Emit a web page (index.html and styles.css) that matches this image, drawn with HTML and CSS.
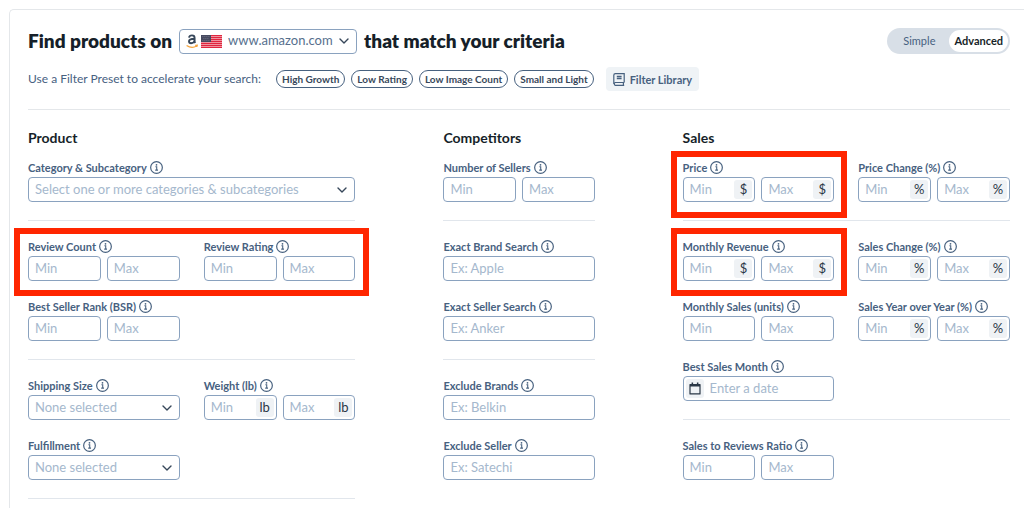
FILE: index.html
```html
<!DOCTYPE html>
<html lang="en">
<head>
    <meta charset="UTF-8">
    <meta name="viewport" content="width=device-width, initial-scale=1.0">
    <title>Product Database</title>
    <link rel="stylesheet" href="styles.css">
</head>
<body>
    <!-- Shared icons -->
    <svg class="sprite" aria-hidden="true">
        <symbol id="info" viewBox="0 0 12 12">
            <circle cx="6" cy="6" r="5.4" fill="none" stroke="currentColor" stroke-width="1.1"/>
            <path d="M5 5.3h1.2v3M4.8 8.4h2.6" fill="none" stroke="currentColor" stroke-width="1"/>
            <circle cx="6" cy="3.5" r="0.8" fill="currentColor"/>
        </symbol>
        <symbol id="chevron" viewBox="0 0 10 6">
            <path d="M1 1l4 4 4-4" fill="none" stroke="currentColor" stroke-width="1.4" stroke-linecap="round" stroke-linejoin="round"/>
        </symbol>
    </svg>

    <main class="card">
        <header class="header">
            <h1 class="title">
                <span class="title-text">Find products on</span>
                <span class="control market">
                    <svg class="amazon" viewBox="0 0 12 14" aria-hidden="true">
                        <path d="M3 3.6C3.3 2 4.4 1.4 6 1.4c2 0 2.6.9 2.6 2.5v3.3c0 .8.3 1.1.8 1.7M8.6 4.7C5 4.7 3 5.5 3 7.3c0 1.4.8 2 2.1 2 2 0 3.5-1.3 3.5-3.3" fill="none" stroke="#37475a" stroke-width="1.9"/>
                        <path d="M.6 11.4c3.1 2.2 7.2 2.3 10.1.6M9.2 11.3l2.1-.1-.5 1.7" fill="none" stroke="#f5a33b" stroke-width="1.2"/>
                    </svg>
                    <svg class="flag" viewBox="0 0 21 13" aria-hidden="true">
                        <rect width="21" height="13" fill="#fff"/>
                        <path d="M0 .5h21M0 2.5h21M0 4.5h21M0 6.5h21M0 8.5h21M0 10.5h21M0 12.5h21" stroke="#e0263f" stroke-width="1.3"/>
                        <rect width="10" height="7" fill="#46495f"/>
                        <path d="M1.5 1.5h7M2.5 3.5h6M1.5 5.5h7" stroke="#8d90a3" stroke-width=".7" stroke-dasharray=".8 1.2"/>
                    </svg>
                    <select aria-label="Marketplace">
                        <option>www.amazon.com</option>
                    </select>
                    <svg class="chevron"><use href="#chevron"/></svg>
                </span>
                <span class="title-text">that match your criteria</span>
            </h1>
            <div class="toggle">
                <button type="button">Simple</button>
                <button type="button" class="active">Advanced</button>
            </div>
        </header>

        <div class="presets">
            <p>Use a Filter Preset to accelerate your search:</p>
            <button type="button" class="pill">High Growth</button>
            <button type="button" class="pill">Low Rating</button>
            <button type="button" class="pill">Low Image Count</button>
            <button type="button" class="pill">Small and Light</button>
            <button type="button" class="library">
                <svg viewBox="0 0 12 13" fill="none" stroke="currentColor" stroke-width="1.2" aria-hidden="true">
                    <path d="M11.2 9.5H2.4a1.5 1.5 0 0 0 0 2.9h8.8M10.4 9.5v2.9M11.2 9.5V.7H2.4C1.4.7.8 1.3.8 2.2v8.7"/>
                    <path d="M3.8 3.5h4.8M3.8 5.5h4.8" stroke-width="1.4"/>
                </svg>
                Filter Library
            </button>
        </div>

        <form class="filters">
            <section class="column">
                <h2>Product</h2>
                <div class="field">
                    <label for="category">Category &amp; Subcategory <svg class="info"><use href="#info"/></svg></label>
                    <div class="control">
                        <select id="category"><option>Select one or more categories &amp; subcategories</option></select>
                        <svg class="chevron"><use href="#chevron"/></svg>
                    </div>
                </div>
                <hr>
                <div class="row highlight highlight-wide">
                    <div class="field">
                        <label for="reviews">Review Count <svg class="info"><use href="#info"/></svg></label>
                        <div class="range">
                            <div class="control"><input id="reviews" type="text" placeholder="Min"></div>
                            <div class="control"><input type="text" placeholder="Max" aria-label="Review Count max"></div>
                        </div>
                    </div>
                    <div class="field">
                        <label for="rating">Review Rating <svg class="info"><use href="#info"/></svg></label>
                        <div class="range">
                            <div class="control"><input id="rating" type="text" placeholder="Min"></div>
                            <div class="control"><input type="text" placeholder="Max" aria-label="Review Rating max"></div>
                        </div>
                    </div>
                </div>
                <div class="row">
                    <div class="field">
                        <label for="bsr">Best Seller Rank (BSR) <svg class="info"><use href="#info"/></svg></label>
                        <div class="range">
                            <div class="control"><input id="bsr" type="text" placeholder="Min"></div>
                            <div class="control"><input type="text" placeholder="Max" aria-label="Best Seller Rank max"></div>
                        </div>
                    </div>
                </div>
                <hr>
                <div class="row">
                    <div class="field">
                        <label for="size">Shipping Size <svg class="info"><use href="#info"/></svg></label>
                        <div class="control">
                            <select id="size"><option>None selected</option></select>
                            <svg class="chevron"><use href="#chevron"/></svg>
                        </div>
                    </div>
                    <div class="field">
                        <label for="weight">Weight (lb) <svg class="info"><use href="#info"/></svg></label>
                        <div class="range">
                            <div class="control"><input id="weight" type="text" placeholder="Min"><span class="unit">lb</span></div>
                            <div class="control"><input type="text" placeholder="Max" aria-label="Weight max"><span class="unit">lb</span></div>
                        </div>
                    </div>
                </div>
                <div class="row">
                    <div class="field">
                        <label for="fulfillment">Fulfillment <svg class="info"><use href="#info"/></svg></label>
                        <div class="control">
                            <select id="fulfillment"><option>None selected</option></select>
                            <svg class="chevron"><use href="#chevron"/></svg>
                        </div>
                    </div>
                </div>
                <hr>
            </section>

            <section class="column">
                <h2>Competitors</h2>
                <div class="field">
                    <label for="sellers">Number of Sellers <svg class="info"><use href="#info"/></svg></label>
                    <div class="range">
                        <div class="control"><input id="sellers" type="text" placeholder="Min"></div>
                        <div class="control"><input type="text" placeholder="Max" aria-label="Number of Sellers max"></div>
                    </div>
                </div>
                <hr>
                <div class="field">
                    <label for="brand">Exact Brand Search <svg class="info"><use href="#info"/></svg></label>
                    <div class="control"><input id="brand" type="text" placeholder="Ex: Apple"></div>
                </div>
                <div class="field">
                    <label for="seller">Exact Seller Search <svg class="info"><use href="#info"/></svg></label>
                    <div class="control"><input id="seller" type="text" placeholder="Ex: Anker"></div>
                </div>
                <hr>
                <div class="field">
                    <label for="no-brands">Exclude Brands <svg class="info"><use href="#info"/></svg></label>
                    <div class="control"><input id="no-brands" type="text" placeholder="Ex: Belkin"></div>
                </div>
                <div class="field">
                    <label for="no-seller">Exclude Seller <svg class="info"><use href="#info"/></svg></label>
                    <div class="control"><input id="no-seller" type="text" placeholder="Ex: Satechi"></div>
                </div>
            </section>

            <section class="column">
                <h2>Sales</h2>
                <div class="row">
                    <div class="field highlight highlight-price">
                        <label for="price">Price <svg class="info"><use href="#info"/></svg></label>
                        <div class="range">
                            <div class="control"><input id="price" type="text" placeholder="Min"><span class="unit">$</span></div>
                            <div class="control"><input type="text" placeholder="Max" aria-label="Price max"><span class="unit">$</span></div>
                        </div>
                    </div>
                    <div class="field">
                        <label for="price-change">Price Change (%) <svg class="info"><use href="#info"/></svg></label>
                        <div class="range">
                            <div class="control"><input id="price-change" type="text" placeholder="Min"><span class="unit">%</span></div>
                            <div class="control"><input type="text" placeholder="Max" aria-label="Price Change max"><span class="unit">%</span></div>
                        </div>
                    </div>
                </div>
                <hr>
                <div class="row">
                    <div class="field highlight">
                        <label for="revenue">Monthly Revenue <svg class="info"><use href="#info"/></svg></label>
                        <div class="range">
                            <div class="control"><input id="revenue" type="text" placeholder="Min"><span class="unit">$</span></div>
                            <div class="control"><input type="text" placeholder="Max" aria-label="Monthly Revenue max"><span class="unit">$</span></div>
                        </div>
                    </div>
                    <div class="field">
                        <label for="sales-change">Sales Change (%) <svg class="info"><use href="#info"/></svg></label>
                        <div class="range">
                            <div class="control"><input id="sales-change" type="text" placeholder="Min"><span class="unit">%</span></div>
                            <div class="control"><input type="text" placeholder="Max" aria-label="Sales Change max"><span class="unit">%</span></div>
                        </div>
                    </div>
                </div>
                <div class="row">
                    <div class="field">
                        <label for="monthly-sales">Monthly Sales (units) <svg class="info"><use href="#info"/></svg></label>
                        <div class="range">
                            <div class="control"><input id="monthly-sales" type="text" placeholder="Min"></div>
                            <div class="control"><input type="text" placeholder="Max" aria-label="Monthly Sales max"></div>
                        </div>
                    </div>
                    <div class="field">
                        <label for="yoy">Sales Year over Year (%) <svg class="info"><use href="#info"/></svg></label>
                        <div class="range">
                            <div class="control"><input id="yoy" type="text" placeholder="Min"><span class="unit">%</span></div>
                            <div class="control"><input type="text" placeholder="Max" aria-label="Sales Year over Year max"><span class="unit">%</span></div>
                        </div>
                    </div>
                </div>
                <div class="row">
                    <div class="field">
                        <label for="month">Best Sales Month <svg class="info"><use href="#info"/></svg></label>
                        <div class="control date">
                            <span class="unit">
                                <svg viewBox="0 0 12 13" aria-hidden="true">
                                    <path d="M1 2.5h10v9.4H1z" fill="none" stroke="currentColor" stroke-width="1.2" stroke-linejoin="round"/>
                                    <path d="M1 2h10v2.6H1zM2.6.4h1.5V2H2.6zM7.9.4h1.5V2H7.9z" fill="currentColor"/>
                                </svg>
                            </span>
                            <input id="month" type="text" placeholder="Enter a date">
                        </div>
                    </div>
                </div>
                <hr>
                <div class="row">
                    <div class="field">
                        <label for="ratio">Sales to Reviews Ratio <svg class="info"><use href="#info"/></svg></label>
                        <div class="range">
                            <div class="control"><input id="ratio" type="text" placeholder="Min"></div>
                            <div class="control"><input type="text" placeholder="Max" aria-label="Sales to Reviews Ratio max"></div>
                        </div>
                    </div>
                </div>
            </section>
        </form>
    </main>
</body>
</html>
```
FILE: styles.css
```css
* {
    margin: 0;
    padding: 0;
    box-sizing: border-box;
}

body {
    font-family: Lato, "Open Sans", sans-serif;
    font-size: 12px;
    color: #47617f;
    background: #fff;
    padding: 9px 0 0 9px;
}

button,
input,
select {
    font: inherit;
    color: inherit;
    border: none;
    background: none;
    outline: none;
}

button {
    cursor: pointer;
}

.sprite {
    display: none;
}

.card {
    min-height: calc(100vh - 9px);
    padding: 18px 14px 0 18px;
    border: 1px solid #e4e7ea;
    border-width: 1px 0 0 1px;
    border-top-left-radius: 5px;
}

.header {
    display: flex;
    justify-content: space-between;
    align-items: center;
}

.title {
    display: flex;
    align-items: center;
    gap: 7px;
    font-size: 19px;
    font-weight: 800;
    color: #161f29;
}

.title-text {
    padding-bottom: 2px;
}

.control {
    display: flex;
    align-items: center;
    flex: 1;
    min-width: 0;
    height: 25px;
    padding-right: 2px;
    border: 1px solid #8aa2bf;
    border-radius: 4px;
    background: #fff;
    font-size: 13px;
    font-weight: 400;
}

.control input,
.control select {
    flex: 1;
    width: 100%;
    min-width: 0;
    height: 100%;
    padding: 0 0 2px 6px;
    appearance: none;
}

.control select {
    color: #a5b8cd;
}

.control input::placeholder {
    color: #a5b8cd;
}

.chevron {
    flex: none;
    width: 10px;
    height: 6px;
    margin-right: 5px;
    color: #37475a;
}

.market {
    flex: none;
    padding-left: 6px;
}

.market select {
    padding-right: 6px;
    color: #566f8d;
}

.amazon {
    width: 12px;
    height: 14px;
    margin-right: 3px;
}

.flag {
    width: 21px;
    height: 13px;
}

.toggle {
    display: flex;
    padding: 2px;
    border-radius: 13px;
    background: #d8dfe7;
    font-size: 11px;
    color: #47617f;
}

.toggle button {
    height: 22px;
    padding: 0 14px 1px;
    border-radius: 11px;
}

.toggle .active {
    padding: 0 5px 1px;
    background: #fff;
    color: #161f29;
    font-weight: 700;
}

.presets {
    display: flex;
    align-items: center;
    gap: 6px;
    margin-top: 13px;
    padding-bottom: 18px;
    border-bottom: 1px solid #e4e7ea;
}

.presets p {
    margin-right: 9px;
    padding-bottom: 1px;
    font-size: 12px;
}

.pill {
    height: 18px;
    padding: 0 5px;
    border: 1px solid #47617f;
    border-radius: 9px;
    font-size: 10px;
    font-weight: 700;
    color: #37475a;
}

.library {
    display: flex;
    align-items: center;
    gap: 5px;
    height: 24px;
    margin-left: 6px;
    padding: 0 7px;
    border-radius: 4px;
    background: #eff3f6;
    font-size: 11px;
    font-weight: 700;
}

.library svg {
    width: 12px;
    height: 13px;
}

.filters {
    display: grid;
    grid-template-columns: 13fr 6fr 13fr;
    gap: 88px;
    padding-top: 19px;
}

.column {
    display: flex;
    flex-direction: column;
    gap: 17px;
    min-width: 0;
}

h2 {
    margin-bottom: -5px;
    line-height: 18px;
    font-size: 14px;
    font-weight: 700;
    color: #161f29;
}

hr {
    margin-top: 1px;
    border: none;
    border-top: 1px solid #e1e6ec;
}

.row {
    display: grid;
    grid-template-columns: 1fr 1fr;
    gap: 24px;
}

.field label {
    display: flex;
    align-items: center;
    gap: 3px;
    height: 18px;
    padding-bottom: 2px;
    font-size: 11px;
    font-weight: 700;
    white-space: nowrap;
}

.info {
    flex: none;
    width: 13px;
    height: 13px;
}

.range {
    display: flex;
    gap: 6px;
}

.unit {
    display: flex;
    justify-content: center;
    align-items: center;
    flex: none;
    width: 18px;
    height: 19px;
    padding-bottom: 1px;
    border-radius: 3px;
    background: #eff2f5;
    color: #2a3746;
}

.date {
    padding-left: 2px;
}

.unit svg {
    width: 12px;
    height: 13px;
}

/* Red frames over the recommended filters */
.highlight {
    position: relative;
}

.highlight::after {
    content: "";
    position: absolute;
    inset: -10px -13px -15px -12px;
    border: 6px solid #ff2600;
    pointer-events: none;
}

.highlight-wide::after {
    inset: -10px -14px -15px;
}

.highlight-price::after {
    inset: -8px -13px -16px -12px;
}
```
